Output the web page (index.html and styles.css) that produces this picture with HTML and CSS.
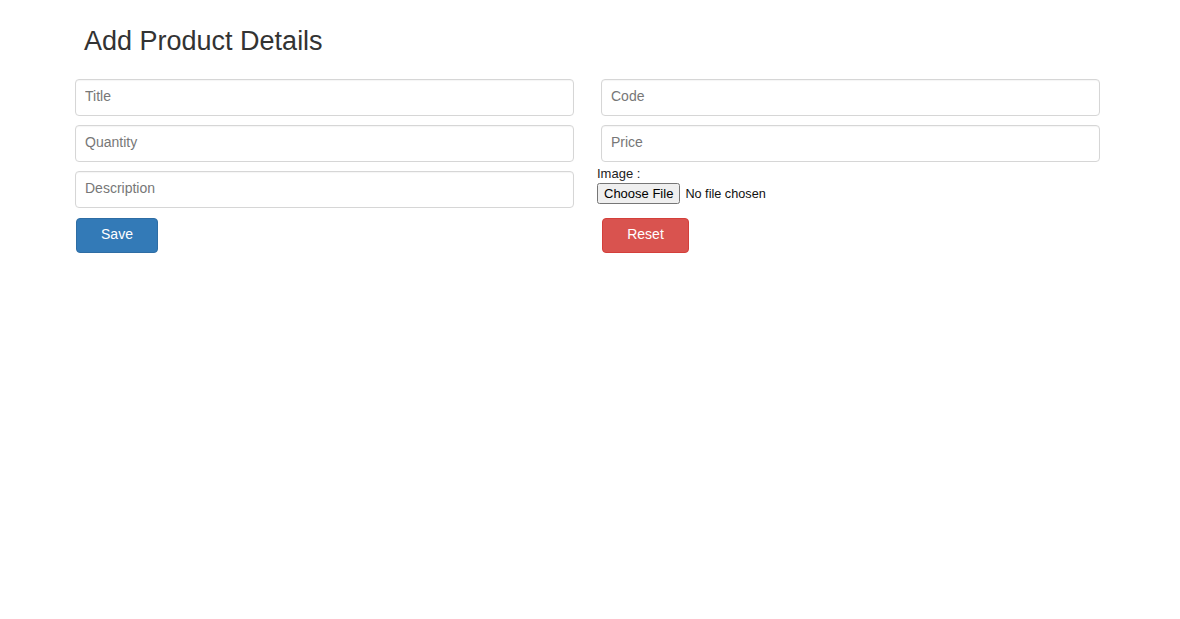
FILE: index.html
```html
<!DOCTYPE html>
<html>
<head>
<meta charset="utf-8">
<title>Add Product Details</title>
<link rel="stylesheet" href="styles.css">
</head>
<body>
  <div class="page">
    <h2 class="heading">Add Product Details</h2>
    <form class="form-grid">
      <input class="field" type="text" placeholder="Title">
      <input class="field field-right" type="text" placeholder="Code">
      <input class="field" type="text" placeholder="Quantity">
      <input class="field field-right" type="text" placeholder="Price">
      <input class="field" type="text" placeholder="Description">
      <div class="image-group">
        <label class="image-label">Image :</label>
        <input class="file-input" type="file">
      </div>
      <button type="button" class="btn btn-save">Save</button>
      <button type="reset" class="btn btn-reset">Reset</button>
    </form>
  </div>
</body>
</html>
```

FILE: styles.css
```css
html, body {
  margin: 0;
  padding: 0;
  background: #fff;
}

body {
  font-family: "Liberation Sans", Arial, Helvetica, sans-serif;
  font-size: 14px;
  color: #333;
}

.page {
  padding: 27px 0 0 75px;
}

.heading {
  margin: 0 0 22px 9px;
  font-size: 27px;
  font-weight: 400;
  line-height: 1.1;
  color: #333;
}

.form-grid {
  display: grid;
  grid-template-columns: 499px 503px;
  grid-template-rows: 37px 37px 37px 36px;
  column-gap: 23px;
  row-gap: 9px;
  margin: 0;
}

.field {
  box-sizing: border-box;
  width: 499px;
  height: 37px;
  margin: 0;
  padding: 5px 9px 7px;
  font-family: "Liberation Sans", Arial, sans-serif;
  font-size: 14px;
  color: #555;
  background: #fff;
  border: 1px solid #d6d6d6;
  border-radius: 4px;
  box-shadow: inset 0 1px 1px rgba(0, 0, 0, 0.04);
  outline: none;
}

.field::placeholder {
  color: #777;
}

.field-right {
  margin-left: 4px;
}

.image-group {
  margin-top: -5px;
  display: flex;
  flex-direction: column;
  align-items: flex-start;
}

.image-label {
  font-size: 13px;
  line-height: 15px;
  color: #222;
  margin-bottom: 2px;
}

.file-input {
  font-family: "Liberation Sans", Arial, sans-serif;
  font-size: 12.7px;
  color: #111;
  margin: 0;
}

.file-input::file-selector-button {
  font-family: "Liberation Sans", Arial, sans-serif;
  font-size: 13px;
  padding: 1px 5px;
  margin-right: 5px;
}

.btn {
  box-sizing: border-box;
  height: 35px;
  margin-top: 1px;
  padding: 5px 0 7px;
  font-family: "Liberation Sans", Arial, sans-serif;
  font-size: 14px;
  line-height: 20px;
  color: #fff;
  border: 1px solid transparent;
  border-radius: 4px;
  cursor: pointer;
  justify-self: start;
}

.btn-save {
  width: 82px;
  margin-left: 1px;
  background: #337ab7;
  border-color: #2e6da4;
}

.btn-reset {
  width: 87px;
  margin-left: 5px;
  background: #d9534f;
  border-color: #d43f3a;
}
```
